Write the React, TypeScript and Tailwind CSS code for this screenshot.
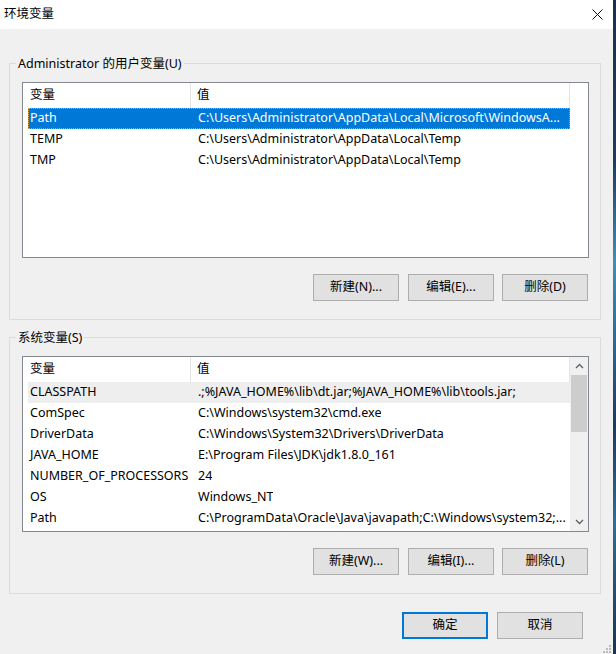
import React from "react";

type Row = { name: string; value: string };

const userVars: Row[] = [
  {
    name: "Path",
    value: "C:\\Users\\Administrator\\AppData\\Local\\Microsoft\\WindowsA...",
  },
  { name: "TEMP", value: "C:\\Users\\Administrator\\AppData\\Local\\Temp" },
  { name: "TMP", value: "C:\\Users\\Administrator\\AppData\\Local\\Temp" },
];

const sysVars: Row[] = [
  { name: "CLASSPATH", value: ".;%JAVA_HOME%\\lib\\dt.jar;%JAVA_HOME%\\lib\\tools.jar;" },
  { name: "ComSpec", value: "C:\\Windows\\system32\\cmd.exe" },
  { name: "DriverData", value: "C:\\Windows\\System32\\Drivers\\DriverData" },
  { name: "JAVA_HOME", value: "E:\\Program Files\\JDK\\jdk1.8.0_161" },
  { name: "NUMBER_OF_PROCESSORS", value: "24" },
  { name: "OS", value: "Windows_NT" },
  {
    name: "Path",
    value: "C:\\ProgramData\\Oracle\\Java\\javapath;C:\\Windows\\system32;...",
  },
];

const WinButton = ({
  label,
  primary,
  className = "",
}: {
  label: string;
  primary?: boolean;
  className?: string;
}) => (
  <button
    className={
      "w-[86px] h-[27px] flex items-center justify-center bg-[#e1e1e1] text-black " +
      (primary ? "border-2 border-[#0078d7] " : "border border-[#adadad] ") +
      className
    }
  >
    {label}
  </button>
);

const Scrollbar = () => (
  <div className="w-[18px] h-full bg-[#f0f0f0] flex flex-col items-center">
    <div className="h-[18px] w-full flex items-center justify-center">
      <svg width="9" height="6" viewBox="0 0 9 6">
        <path d="M1 5 L4.5 1.5 L8 5" fill="none" stroke="#606060" strokeWidth="1.3" />
      </svg>
    </div>
    <div className="w-[16px] h-[57px] bg-[#cdcdcd]" />
    <div className="flex-1" />
    <div className="h-[18px] w-full flex items-center justify-center">
      <svg width="9" height="6" viewBox="0 0 9 6">
        <path d="M1 1 L4.5 4.5 L8 1" fill="none" stroke="#606060" strokeWidth="1.3" />
      </svg>
    </div>
  </div>
);

const VarList = ({
  rows,
  selected,
  hover,
  scroll,
}: {
  rows: Row[];
  selected?: number;
  hover?: number;
  scroll?: boolean;
}) => (
  <div className="w-[567px] h-[176px] border border-[#828790] bg-white flex overflow-hidden">
    <div className="w-[547px] flex flex-col">
      <div className="h-[25px] flex border-r border-[#e5e5e5]">
        <div className="w-[168px] pl-[7px] flex items-center border-r border-[#e5e5e5]">变量</div>
        <div className="flex-1 pl-[6px] flex items-center">值</div>
      </div>
      {rows.map((r, i) => (
        <div
          key={r.name + i}
          className={
            "ml-[5px] w-[542px] h-[21px] flex items-center whitespace-nowrap overflow-hidden " +
            (i === selected
              ? "bg-[#0078d7] text-white outline-1 outline-dotted outline-[#d9a050] -outline-offset-1"
              : i === hover
              ? "bg-[#eeeeee]"
              : "")
          }
        >
          <div className="w-[163px] pl-[2px] shrink-0">{r.name}</div>
          <div className="pl-[7px] overflow-hidden">{r.value}</div>
        </div>
      ))}
    </div>
    {scroll ? <Scrollbar /> : <div className="w-[18px]" />}
  </div>
);

const Group = ({
  title,
  children,
  className = "",
}: {
  title: string;
  children: React.ReactNode;
  className?: string;
}) => (
  <fieldset
    className={
      "w-[592px] border border-[#dcdcdc] pl-[12px] pr-[11px] pt-[10px] pb-[18px] " + className
    }
  >
    <legend className="-ml-[6px] px-[2px] leading-[17px]">{title}</legend>
    {children}
  </fieldset>
);

export default function App() {
  return (
    <div
      className="w-[616px] h-[654px] flex text-[12.5px] text-black overflow-hidden"
      style={{ fontFamily: '"Noto Sans", "Noto Sans CJK SC", sans-serif' }}
    >
      <div className="w-[613px] h-full flex flex-col">
        <div className="h-[29px] bg-white flex items-center justify-between pl-[4px] pr-[10px]">
          <span>环境变量</span>
          <svg width="11" height="11" viewBox="0 0 11 11">
            <path d="M0.5 0.5 L10.5 10.5 M10.5 0.5 L0.5 10.5" stroke="#111" strokeWidth="1" />
          </svg>
        </div>
        <div className="flex-1 bg-[#f0f0f0] pl-[9px] pt-[26px] flex flex-col relative">
          <Group title="Administrator 的用户变量(U)">
            <VarList rows={userVars} selected={0} />
            <div className="flex justify-end mt-[16px] pr-[1px] gap-[8px]">
              <WinButton label="新建(N)..." className="mr-[1px]" />
              <WinButton label="编辑(E)..." />
              <WinButton label="删除(D)" />
            </div>
          </Group>
          <Group title="系统变量(S)" className="mt-[9px]">
            <VarList rows={sysVars} hover={0} scroll />
            <div className="flex justify-end mt-[16px] pr-[1px] gap-[8px]">
              <WinButton label="新建(W)..." className="mr-[1px]" />
              <WinButton label="编辑(I)..." />
              <WinButton label="删除(L)" />
            </div>
          </Group>
          <div className="w-[574px] flex justify-end gap-[9px] mt-[18px]">
            <WinButton label="确定" primary />
            <WinButton label="取消" />
          </div>
          <svg className="absolute right-[2px] bottom-[1px]" width="9" height="9" viewBox="0 0 9 9">
            {[
              [7, 1],
              [7, 4],
              [4, 4],
              [7, 7],
              [4, 7],
              [1, 7],
            ].map(([x, y], i) => (
              <rect key={i} x={x} y={y} width="2" height="2" fill="#bcbcbc" />
            ))}
          </svg>
        </div>
      </div>
      <div className="w-[3px] h-full bg-[linear-gradient(to_bottom,#1b2f52_0%,#1e3c66_25%,#3f8fb8_40%,#2a6a98_52%,#1b3a63_65%,#2b6f99_80%,#1a3356_100%)]" />
    </div>
  );
}
